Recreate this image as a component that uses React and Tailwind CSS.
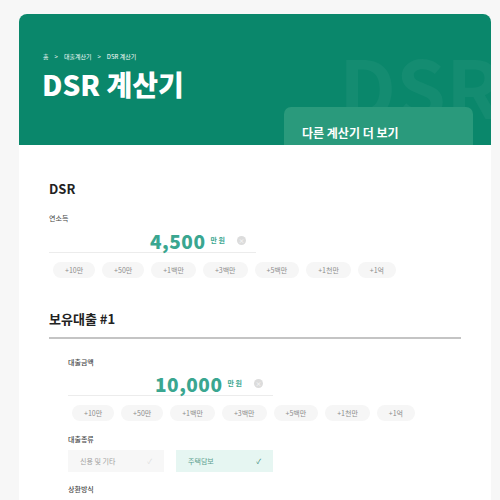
import React from 'react';

const CHIPS = ['+10만', '+50만', '+1백만', '+3백만', '+5백만', '+1천만', '+1억'];

const font = { fontFamily: '"Noto Sans CJK KR", "Noto Sans", sans-serif' };

const AmountField = ({ value }) => (
  <div className="flex items-center justify-end gap-[4px] h-[24px] border-b border-[#ececec] pr-[10px]">
    <span className="text-[19px] leading-[24px] font-extrabold text-[#3aa690] tracking-[0.5px]">{value}</span>
    <span className="text-[7px] font-bold text-[#3aa690] ml-[1px] mr-[8px]">만 원</span>
    <span className="w-[9px] h-[9px] rounded-full bg-[#dcdcdc] flex items-center justify-center text-[6px] leading-none text-white">
      ×
    </span>
  </div>
);

const ChipRow = () => (
  <div className="flex gap-[7px] ml-[4px]">
    {CHIPS.map((c) => (
      <button
        key={c}
        className="h-[16px] px-[12px] rounded-full bg-[#f6f6f6] text-[7px] leading-[16px] text-[#8d8d8d] whitespace-nowrap"
      >
        {c}
      </button>
    ))}
  </div>
);

const App = () => {
  return (
    <div className="min-h-[500px] bg-[#f7f7f7] pl-[19px] pt-[14px]" style={font}>
      <div className="w-[472px] rounded-t-[8px] overflow-hidden bg-white">
        <div className="relative h-[131px] bg-[#0a876b] flex flex-col">
          {/* faint watermark behind the header */}
          <span className="absolute z-0 left-[320px] top-[20px] text-[80px] leading-[100px] font-bold text-white/[0.045] whitespace-nowrap select-none">
            DSR
          </span>
          <div className="relative z-10 pl-[24px] pt-[38px] flex items-center gap-[6px] text-[6px] leading-[10px] text-white">
            <span>홈</span>
            <span>&gt;</span>
            <span>대출계산기</span>
            <span>&gt;</span>
            <span>DSR 계산기</span>
          </div>
          <h1 className="relative z-10 pl-[23px] mt-[5px] text-[28px] leading-[34px] font-black text-white">DSR 계산기</h1>
          <div className="relative z-10 mt-auto self-end mr-[18px] w-[189px] h-[38px] rounded-t-[7px] bg-[#2a9a7c] pl-[18px] pt-[12px]">
            <span className="text-[12px] leading-[16px] font-bold text-white">다른 계산기 더 보기</span>
          </div>
        </div>

        <div className="pl-[30px] pr-[30px] pt-[35px] pb-[10px]">
          <h2 className="text-[13px] leading-[18px] font-bold text-[#222]">DSR</h2>
          <p className="mt-[15px] text-[7px] leading-[10px] text-[#444]">연소득</p>
          <div className="w-[207px] mt-[6px]">
            <AmountField value="4,500" />
          </div>
          <div className="mt-[9px]">
            <ChipRow />
          </div>

          <h2 className="mt-[32px] text-[13px] leading-[18px] font-bold text-[#222] pb-[9px] border-b-2 border-[#c4c4c4] w-[412px]">
            보유대출 #1
          </h2>

          <div className="pl-[19px]">
            <p className="mt-[18px] text-[7px] leading-[10px] font-medium text-[#444]">대출금액</p>
            <div className="w-[205px] mt-[5px]">
              <AmountField value="10,000" />
            </div>
            <div className="mt-[9px]">
              <ChipRow />
            </div>

            <p className="mt-[13px] text-[7px] leading-[10px] font-medium text-[#444]">대출종류</p>
            <div className="mt-[6px] flex gap-[12px]">
              <button className="w-[96px] h-[22px] bg-[#f7f7f7] flex items-center justify-between px-[12px] text-[7px] text-[#a0a0a0]">
                <span>신용 및 기타</span>
                <span className="text-[#dedede]">✓</span>
              </button>
              <button className="w-[97px] h-[22px] bg-[#e6f6f2] flex items-center justify-between px-[12px] text-[7px] text-[#5a9e8e]">
                <span>주택담보</span>
                <span className="text-[#3b8c78]">✓</span>
              </button>
            </div>

            <p className="mt-[12px] text-[7px] leading-[10px] font-medium text-[#444]">상환방식</p>
          </div>
        </div>
      </div>
    </div>
  );
};

export default App;
